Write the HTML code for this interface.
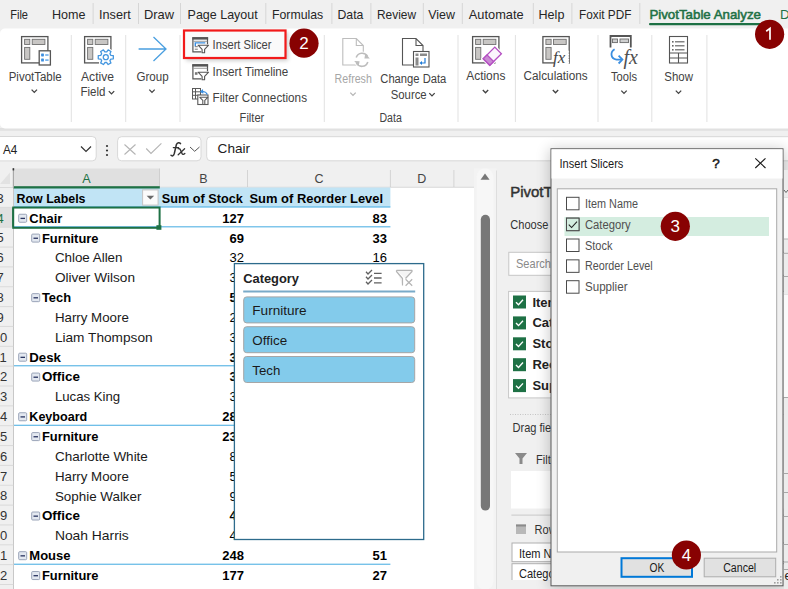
<!DOCTYPE html><html><head><meta charset="utf-8"><style>html,body{margin:0;padding:0;width:788px;height:589px;overflow:hidden;background:#f0f0f0}svg{display:block;font-family:"Liberation Sans",sans-serif}</style></head><body>
<svg width="788" height="589" viewBox="0 0 788 589">
<rect x="0" y="0" width="788" height="589" fill="#f0f0f0"/>
<text x="10.2" y="19" font-size="13" fill="#262626" textLength="17.8" lengthAdjust="spacingAndGlyphs">File</text>
<text x="52" y="19" font-size="13" fill="#262626" textLength="33.5" lengthAdjust="spacingAndGlyphs">Home</text>
<text x="99" y="19" font-size="13" fill="#262626" textLength="31.7" lengthAdjust="spacingAndGlyphs">Insert</text>
<text x="144" y="19" font-size="13" fill="#262626" textLength="30" lengthAdjust="spacingAndGlyphs">Draw</text>
<text x="187.6" y="19" font-size="13" fill="#262626" textLength="70.1" lengthAdjust="spacingAndGlyphs">Page Layout</text>
<text x="272" y="19" font-size="13" fill="#262626" textLength="51.2" lengthAdjust="spacingAndGlyphs">Formulas</text>
<text x="337.5" y="19" font-size="13" fill="#262626" textLength="25.9" lengthAdjust="spacingAndGlyphs">Data</text>
<text x="377" y="19" font-size="13" fill="#262626" textLength="39" lengthAdjust="spacingAndGlyphs">Review</text>
<text x="428.3" y="19" font-size="13" fill="#262626" textLength="26.7" lengthAdjust="spacingAndGlyphs">View</text>
<text x="468.8" y="19" font-size="13" fill="#262626" textLength="54.8" lengthAdjust="spacingAndGlyphs">Automate</text>
<text x="538.5" y="19" font-size="13" fill="#262626" textLength="25.9" lengthAdjust="spacingAndGlyphs">Help</text>
<text x="579" y="19" font-size="13" fill="#262626" textLength="52.4" lengthAdjust="spacingAndGlyphs">Foxit PDF</text>
<rect x="92.6" y="3" width="1" height="21" fill="#d6d6d6"/>
<rect x="138" y="3" width="1" height="21" fill="#d6d6d6"/>
<rect x="180" y="3" width="1" height="21" fill="#d6d6d6"/>
<rect x="265.3" y="3" width="1" height="21" fill="#d6d6d6"/>
<rect x="331.4" y="3" width="1" height="21" fill="#d6d6d6"/>
<rect x="370.4" y="3" width="1" height="21" fill="#d6d6d6"/>
<rect x="422.8" y="3" width="1" height="21" fill="#d6d6d6"/>
<rect x="461.8" y="3" width="1" height="21" fill="#d6d6d6"/>
<rect x="532.8" y="3" width="1" height="21" fill="#d6d6d6"/>
<rect x="571.4" y="3" width="1" height="21" fill="#d6d6d6"/>
<rect x="639.3" y="3" width="1" height="21" fill="#d6d6d6"/>
<text x="649.4" y="19" font-size="13.4" fill="#1e7145" textLength="111.6" lengthAdjust="spacingAndGlyphs" stroke="#1e7145" stroke-width="0.55">PivotTable Analyze</text>
<rect x="649" y="23" width="112.5" height="2.2" rx="1" fill="#1e7145"/>
<text x="780" y="19" font-size="13.4" fill="#1e7145">D</text>
<rect x="0" y="129" width="800" height="2" fill="#e4e4e4"/>
<rect x="0" y="128.3" width="800" height="1" fill="#d9d9d9"/>
<rect x="0" y="28.5" width="800" height="100" rx="5" fill="#ffffff"/>
<rect x="70.8" y="35" width="1" height="87" fill="#e1e1e1"/>
<rect x="125.2" y="35" width="1" height="87" fill="#e1e1e1"/>
<rect x="179.5" y="35" width="1" height="87" fill="#e1e1e1"/>
<rect x="323.8" y="35" width="1" height="87" fill="#e1e1e1"/>
<rect x="457.5" y="35" width="1" height="87" fill="#e1e1e1"/>
<rect x="514.9" y="35" width="1" height="87" fill="#e1e1e1"/>
<rect x="597.5" y="35" width="1" height="87" fill="#e1e1e1"/>
<rect x="651.3" y="35" width="1" height="87" fill="#e1e1e1"/>
<rect x="706.4" y="35" width="1" height="87" fill="#e1e1e1"/>
<rect x="21.6" y="36.6" width="26.3" height="26.3" fill="#fff" stroke="#555" stroke-width="1.3"/>
<rect x="24.6" y="39.3" width="5.2" height="5.2" fill="#c8c6c4" stroke="#707070" stroke-width="0.9"/>
<rect x="32.2" y="39.3" width="12.7" height="5.2" fill="#c8c6c4" stroke="#707070" stroke-width="0.9"/>
<rect x="24.6" y="47.4" width="5.2" height="11.9" fill="#c8c6c4" stroke="#707070" stroke-width="0.9"/>
<rect x="39.2" y="50.8" width="11.2" height="14.2" fill="#fff" stroke="#555" stroke-width="1.3"/>
<rect x="41.1" y="53.4" width="2.8" height="3" rx="0.6" fill="#3d8fe0"/><rect x="45.2" y="54.3" width="3.4" height="1.4" fill="#5aa2e6"/>
<rect x="41.1" y="58.5" width="2.8" height="3" rx="0.6" fill="#3d8fe0"/><rect x="45.2" y="59.4" width="3.4" height="1.4" fill="#5aa2e6"/>
<text x="8.7" y="80.5" font-size="12.3" fill="#424242" textLength="53" lengthAdjust="spacingAndGlyphs">PivotTable</text>
<path d="M31.599999999999998 89.6 L34.3 92.4 L37.0 89.6" fill="none" stroke="#424242" stroke-width="1.3"/>
<rect x="84.6" y="36.6" width="26.3" height="26.3" fill="#fff" stroke="#555" stroke-width="1.3"/>
<rect x="87.6" y="39.3" width="5.2" height="5.2" fill="#c8c6c4" stroke="#707070" stroke-width="0.9"/>
<rect x="95.2" y="39.3" width="12.7" height="5.2" fill="#c8c6c4" stroke="#707070" stroke-width="0.9"/>
<rect x="87.6" y="47.4" width="5.2" height="11.9" fill="#c8c6c4" stroke="#707070" stroke-width="0.9"/>
<g transform="translate(105.8,57.2)"><path d="M7.53 -1.60 L7.53 1.60 L5.07 1.85 L4.14 3.47 L5.15 5.72 L2.38 7.32 L0.94 5.32 L-0.94 5.32 L-2.38 7.32 L-5.15 5.72 L-4.14 3.47 L-5.07 1.85 L-7.53 1.60 L-7.53 -1.60 L-5.07 -1.85 L-4.14 -3.47 L-5.15 -5.72 L-2.38 -7.32 L-0.94 -5.32 L0.94 -5.32 L2.38 -7.32 L5.15 -5.72 L4.14 -3.47 L5.07 -1.85 Z" fill="#fff" stroke="#fff" stroke-width="3.5" stroke-linejoin="round"/><path d="M7.53 -1.60 L7.53 1.60 L5.07 1.85 L4.14 3.47 L5.15 5.72 L2.38 7.32 L0.94 5.32 L-0.94 5.32 L-2.38 7.32 L-5.15 5.72 L-4.14 3.47 L-5.07 1.85 L-7.53 1.60 L-7.53 -1.60 L-5.07 -1.85 L-4.14 -3.47 L-5.15 -5.72 L-2.38 -7.32 L-0.94 -5.32 L0.94 -5.32 L2.38 -7.32 L5.15 -5.72 L4.14 -3.47 L5.07 -1.85 Z" fill="#fff" stroke="#4496df" stroke-width="1.3" stroke-linejoin="round"/><circle r="2.5" fill="none" stroke="#4496df" stroke-width="1.3"/></g>
<text x="81" y="80.5" font-size="12.3" fill="#424242" textLength="33" lengthAdjust="spacingAndGlyphs">Active</text>
<text x="80.4" y="96" font-size="12.3" fill="#424242" textLength="25" lengthAdjust="spacingAndGlyphs">Field</text>
<path d="M108.8 91.1 L111.5 93.9 L114.2 91.1" fill="none" stroke="#424242" stroke-width="1.3"/>
<path d="M138.6 49 H166 M153.5 37 L166 49 L153.5 61" fill="none" stroke="#4a9fe0" stroke-width="1.3"/>
<text x="136.4" y="80.5" font-size="12.3" fill="#424242" textLength="32.2" lengthAdjust="spacingAndGlyphs">Group</text>
<path d="M149.3 89.6 L152 92.4 L154.7 89.6" fill="none" stroke="#424242" stroke-width="1.3"/>
<defs><filter id="sh" x="-20%" y="-30%" width="140%" height="160%"><feGaussianBlur stdDeviation="2"/></filter></defs>
<rect x="186" y="32" width="102" height="28.5" fill="#000" opacity="0.22" filter="url(#sh)"/>
<rect x="184" y="30.5" width="101.5" height="27.5" fill="#fafafa" stroke="#f21a1a" stroke-width="2.2"/>
<path d="M201.3 51.900000000000006 H192.9 V37.800000000000004 H207.5 V44.2" fill="#fff" stroke="#555" stroke-width="1.2"/>
<rect x="192.3" y="37.2" width="15.8" height="2.4" fill="#555"/>
<rect x="193.3" y="40.800000000000004" width="14" height="0.9" fill="#8f8f8f"/>
<path d="M195.3 46.2 V42.900000000000006 H205.3" fill="none" stroke="#3a8ee0" stroke-width="1.4"/>
<path d="M194.8 46.7 H197.8 M194.8 49.2 H197.8" stroke="#777" stroke-width="1"/>
<path d="M198.10000000000002 45.2 H208.60000000000002 L204.60000000000002 49.400000000000006 V52.800000000000004 H202.10000000000002 V49.400000000000006 Z" fill="#fff" stroke="#555" stroke-width="1.1" stroke-linejoin="round"/>
<text x="212.6" y="49.3" font-size="12.5" fill="#424242" textLength="58.8" lengthAdjust="spacingAndGlyphs">Insert Slicer</text>
<path d="M201.3 78.9 H192.9 V64.8 H207.5 V71.2" fill="#fff" stroke="#555" stroke-width="1.2"/>
<rect x="192.3" y="64.2" width="15.8" height="2.4" fill="#555"/>
<rect x="193.3" y="67.8" width="14" height="0.9" fill="#8f8f8f"/>
<rect x="194.9" y="72.2" width="2.6" height="2.6" fill="#777"/>
<path d="M198.10000000000002 72.2 H208.60000000000002 L204.60000000000002 76.4 V79.8 H202.10000000000002 V76.4 Z" fill="#fff" stroke="#555" stroke-width="1.1" stroke-linejoin="round"/>
<text x="212.6" y="75.7" font-size="12.5" fill="#424242" textLength="75.7" lengthAdjust="spacingAndGlyphs">Insert Timeline</text>
<g stroke="#5a5a5a" stroke-width="1" fill="#fff"><rect x="192.5" y="88.5" width="8" height="10.5"/><path d="M192.5 91.8 H200.5 M192.5 95.3 H200.5 M195.5 88.5 V99"/></g>
<g stroke="#5a5a5a" stroke-width="1.1" fill="#fff"><rect x="197.8" y="95" width="10.2" height="9.5"/><path d="M199.8 97.3 H207.8 L204.8 100.3 V104.5 H202.8 V100.3 Z" stroke-linejoin="round"/></g>
<path d="M201.5 92 A4.5 4.5 0 0 1 207.3 94.5" fill="none" stroke="#3a8ee0" stroke-width="1.4"/><path d="M199.8 91.8 L203 89 L203.3 93.8 Z" fill="#3a8ee0"/>
<text x="212.6" y="101.5" font-size="12.5" fill="#424242" textLength="94.4" lengthAdjust="spacingAndGlyphs">Filter Connections</text>
<text x="239.6" y="121.8" font-size="12.3" fill="#424242" textLength="24.7" lengthAdjust="spacingAndGlyphs">Filter</text>
<path d="M342.8 38.5 H356.3 L363.3 45.5 V65 H342.8 Z M356.3 38.5 V45.5 H363.3" fill="#fff" stroke="#bdbdbd" stroke-width="1.1"/>
<circle cx="362" cy="59.8" r="8.2" fill="#fff"/>
<g fill="none" stroke="#bdbdbd" stroke-width="1.6"><path d="M356.2 57.6 A6.2 6.2 0 0 1 367.6 56.6"/><path d="M367.8 62 A6.2 6.2 0 0 1 356.4 63"/></g>
<path d="M365.3 53.6 L369.8 58.6 L364.4 58.4 Z M358.7 66 L354.2 61 L359.6 61.2 Z" fill="#bdbdbd"/>
<text x="334.6" y="82.8" font-size="12.3" fill="#a6a6a6" textLength="37.2" lengthAdjust="spacingAndGlyphs">Refresh</text>
<path d="M350.3 92.6 L353 95.4 L355.7 92.6" fill="none" stroke="#b5b5b5" stroke-width="1.3"/>
<path d="M402.5 38.5 H416 L423 45.5 V65 H402.5 Z M416 38.5 V45.5 H423" fill="#fff" stroke="#555" stroke-width="1.1"/>
<rect x="413.5" y="51.5" width="15.5" height="15.5" fill="#fff" stroke="#555" stroke-width="1.1"/><rect x="415.5" y="53.5" width="3" height="2.5" fill="#8a8a8a"/><rect x="420" y="53.5" width="7" height="2.5" fill="#8a8a8a"/><rect x="415.5" y="57.5" width="3" height="8" fill="#8a8a8a"/>
<path d="M425 58 V63 H421" fill="none" stroke="#1f7ad6" stroke-width="1.2"/><path d="M419.5 63 L422 61 L422 65 Z" fill="#1f7ad6"/>
<text x="380.3" y="82.8" font-size="12.3" fill="#424242" textLength="66" lengthAdjust="spacingAndGlyphs">Change Data</text>
<text x="390.7" y="98.8" font-size="12.3" fill="#424242" textLength="36" lengthAdjust="spacingAndGlyphs">Source</text>
<path d="M429.3 93.1 L432 95.9 L434.7 93.1" fill="none" stroke="#424242" stroke-width="1.3"/>
<text x="379.5" y="121.8" font-size="12.3" fill="#424242" textLength="22.3" lengthAdjust="spacingAndGlyphs">Data</text>
<rect x="472.6" y="36.6" width="26.3" height="26.3" fill="#fff" stroke="#555" stroke-width="1.3"/>
<rect x="475.6" y="39.3" width="5.2" height="5.2" fill="#c8c6c4" stroke="#707070" stroke-width="0.9"/>
<rect x="483.2" y="39.3" width="12.7" height="5.2" fill="#c8c6c4" stroke="#707070" stroke-width="0.9"/>
<rect x="475.6" y="47.4" width="5.2" height="11.9" fill="#c8c6c4" stroke="#707070" stroke-width="0.9"/>
<rect x="495.5" y="57" width="6" height="8" fill="#fff"/>
<g transform="translate(492.3,56.2) rotate(-45)"><rect x="-8.2" y="-4.65" width="16.4" height="9.3" fill="#fff" stroke="#fff" stroke-width="3.5"/><rect x="-8.2" y="-4.65" width="16.4" height="9.3" fill="#fbf6fc" stroke="#b44fc2" stroke-width="1.3"/><rect x="-8.2" y="-4.65" width="5.4" height="9.3" fill="#c98ad3" stroke="#b44fc2" stroke-width="1.3"/></g>
<text x="466.2" y="80.4" font-size="12.3" fill="#424242" textLength="39.2" lengthAdjust="spacingAndGlyphs">Actions</text>
<path d="M482.8 90.0 L485.5 92.80000000000001 L488.2 90.0" fill="none" stroke="#424242" stroke-width="1.3"/>
<rect x="542.9" y="36.6" width="26.3" height="26.3" fill="#fff" stroke="#555" stroke-width="1.3"/>
<rect x="545.9" y="39.3" width="5.2" height="5.2" fill="#c8c6c4" stroke="#707070" stroke-width="0.9"/>
<rect x="553.5" y="39.3" width="12.7" height="5.2" fill="#c8c6c4" stroke="#707070" stroke-width="0.9"/>
<rect x="545.9" y="47.4" width="5.2" height="11.9" fill="#c8c6c4" stroke="#707070" stroke-width="0.9"/>
<rect x="554.5" y="50" width="14.6" height="15" fill="#fff"/>
<path d="M569.2 50 V63.5" stroke="#666" stroke-width="1.1" stroke-dasharray="1.2 1.4"/>
<text x="553" y="63" font-family="Liberation Serif" font-style="italic" font-size="17" fill="#444">fx</text>
<text x="523.6" y="80.4" font-size="12.3" fill="#424242" textLength="64" lengthAdjust="spacingAndGlyphs">Calculations</text>
<path d="M552.8 90.0 L555.5 92.80000000000001 L558.2 90.0" fill="none" stroke="#424242" stroke-width="1.3"/>
<path d="M610.5 47.5 V36 H630.8 V47.5" fill="none" stroke="#555" stroke-width="1.8"/>
<rect x="612.5" y="39" width="5" height="3.6" fill="#cfcfcf" stroke="#6a6a6a" stroke-width="0.9"/><rect x="620" y="39" width="8.5" height="3.6" fill="#cfcfcf" stroke="#6a6a6a" stroke-width="0.9"/>
<path d="M614.6 49.2 C610.3 51.5 610 58.6 616.5 59.6 H621.5" fill="none" stroke="#3a8ee0" stroke-width="1.8"/><path d="M618.6 55.7 L622.4 59.6 L618.6 63.5" fill="none" stroke="#3a8ee0" stroke-width="1.8"/>
<text x="623.5" y="63.5" font-family="Liberation Serif" font-style="italic" font-size="20" fill="#505050">fx</text>
<text x="611" y="80.8" font-size="12.3" fill="#424242" textLength="26" lengthAdjust="spacingAndGlyphs">Tools</text>
<path d="M621.3 90.6 L624 93.4 L626.7 90.6" fill="none" stroke="#424242" stroke-width="1.3"/>
<rect x="669.5" y="36.5" width="18" height="26.5" fill="#fff" stroke="#555" stroke-width="1.1"/>
<rect x="672" y="41" width="1.6" height="1.6" fill="#666"/><rect x="675" y="41.2" width="9.5" height="1.2" fill="#666"/>
<rect x="672" y="45" width="1.6" height="1.6" fill="#666"/><rect x="675" y="45.2" width="9.5" height="1.2" fill="#666"/>
<rect x="672" y="49" width="1.6" height="1.6" fill="#666"/><rect x="675" y="49.2" width="9.5" height="1.2" fill="#666"/>
<path d="M669.5 53 H687.5 M669.5 58 H687.5 M678.5 53 V63" fill="none" stroke="#555" stroke-width="1.1"/>
<text x="664.3" y="80.8" font-size="12.3" fill="#424242" textLength="28.7" lengthAdjust="spacingAndGlyphs">Show</text>
<path d="M675.8 90.6 L678.5 93.4 L681.2 90.6" fill="none" stroke="#424242" stroke-width="1.3"/>
<rect x="-5" y="136.5" width="101.2" height="24.4" rx="4" fill="#fff" stroke="#d8d8d8" stroke-width="1"/>
<text x="3" y="153.8" font-size="13" fill="#222" textLength="14.3" lengthAdjust="spacingAndGlyphs">A4</text>
<path d="M81 146.5 L86 151.5 L91 146.5" fill="none" stroke="#333" stroke-width="1.2"/>
<circle cx="107" cy="146" r="1.1" fill="#333"/>
<circle cx="107" cy="150.5" r="1.1" fill="#333"/>
<circle cx="107" cy="155" r="1.1" fill="#333"/>
<rect x="117.6" y="136.7" width="83.4" height="24.1" rx="4" fill="#fff" stroke="#d8d8d8" stroke-width="1"/>
<path d="M124.5 144.5 L135.5 154.5 M135.5 144.5 L124.5 154.5" stroke="#b4b4b4" stroke-width="1.1"/>
<path d="M146.2 148.5 L151 153.5 L161.4 143.3" fill="none" stroke="#b4b4b4" stroke-width="1.1"/>
<g fill="none" stroke="#333" stroke-linecap="round"><path d="M180.5 143.6 C179.5 142.4 177.3 142.3 176.4 144.5 L174.3 153.5 C173.6 156.2 172 156.3 171 155.3" stroke-width="1.5"/><path d="M173.3 147.6 H178.6" stroke-width="1.2"/><path d="M178.2 148.6 C179.8 148.2 180.4 149.2 181.2 151.4 L182 153.4 C182.5 154.6 183.6 154.8 184.8 153.6" stroke-width="1.4"/><path d="M184.6 148.8 L178.2 154.8" stroke-width="1.3"/></g>
<path d="M190 147 L194.7 151.3 L199.5 147" fill="none" stroke="#555" stroke-width="1"/>
<rect x="206.7" y="136.7" width="600" height="24.1" rx="4" fill="#fff" stroke="#d8d8d8" stroke-width="1"/>
<text x="217.6" y="153.2" font-size="13" fill="#222" textLength="32.4" lengthAdjust="spacingAndGlyphs">Chair</text>
<rect x="0" y="168.5" width="474" height="19" fill="#f0f0f0"/>
<rect x="13.5" y="168.5" width="146" height="19" fill="#e0e0e0"/>
<path d="M0 184 L10 184 L10 172.5 Z" fill="#e2e2e2"/>
<rect x="13" y="168.5" width="1" height="19" fill="#cfcfcf"/>
<rect x="247.0" y="170" width="1" height="17" fill="#d4d4d4"/>
<rect x="389.9" y="170" width="1" height="17" fill="#d4d4d4"/>
<rect x="453.4" y="170" width="1" height="17" fill="#d4d4d4"/>
<rect x="159" y="168.5" width="1" height="19" fill="#cfcfcf"/>
<rect x="160" y="186.9" width="314" height="1" fill="#bdbdbd"/>
<text x="82.2" y="183" font-size="12.5" fill="#1e7145" textLength="8.4" lengthAdjust="spacingAndGlyphs">A</text>
<text x="203.5" y="183" font-size="12.5" fill="#444" text-anchor="middle">B</text>
<text x="319" y="183" font-size="12.5" fill="#444" text-anchor="middle">C</text>
<text x="421.8" y="183" font-size="12.5" fill="#444" text-anchor="middle">D</text>
<rect x="0" y="187.5" width="13.5" height="401.5" fill="#f0f0f0"/>
<rect x="0" y="207.35" width="13.5" height="19.85" fill="#e0e0e0"/>
<rect x="13" y="187.5" width="1" height="401.5" fill="#c8c8c8"/>
<rect x="12.3" y="207.35" width="2" height="19.85" fill="#1e7145"/>
<rect x="0" y="187.00" width="13.3" height="1" fill="#dadada"/>
<rect x="0" y="206.85" width="13.3" height="1" fill="#dadada"/>
<rect x="0" y="226.70" width="13.3" height="1" fill="#dadada"/>
<rect x="0" y="246.55" width="13.3" height="1" fill="#dadada"/>
<rect x="0" y="266.40" width="13.3" height="1" fill="#dadada"/>
<rect x="0" y="286.25" width="13.3" height="1" fill="#dadada"/>
<rect x="0" y="306.10" width="13.3" height="1" fill="#dadada"/>
<rect x="0" y="325.95" width="13.3" height="1" fill="#dadada"/>
<rect x="0" y="345.80" width="13.3" height="1" fill="#dadada"/>
<rect x="0" y="365.65" width="13.3" height="1" fill="#dadada"/>
<rect x="0" y="385.50" width="13.3" height="1" fill="#dadada"/>
<rect x="0" y="405.35" width="13.3" height="1" fill="#dadada"/>
<rect x="0" y="425.20" width="13.3" height="1" fill="#dadada"/>
<rect x="0" y="445.05" width="13.3" height="1" fill="#dadada"/>
<rect x="0" y="464.90" width="13.3" height="1" fill="#dadada"/>
<rect x="0" y="484.75" width="13.3" height="1" fill="#dadada"/>
<rect x="0" y="504.60" width="13.3" height="1" fill="#dadada"/>
<rect x="0" y="524.45" width="13.3" height="1" fill="#dadada"/>
<rect x="0" y="544.30" width="13.3" height="1" fill="#dadada"/>
<rect x="0" y="564.15" width="13.3" height="1" fill="#dadada"/>
<rect x="0" y="584.00" width="13.3" height="1" fill="#dadada"/>
<text x="0" y="202.7" font-size="13" fill="#333" text-anchor="middle">3</text>
<text x="0" y="222.55" font-size="13" fill="#1e7145" text-anchor="middle">4</text>
<text x="0" y="242.4" font-size="13" fill="#333" text-anchor="middle">5</text>
<text x="0" y="262.25" font-size="13" fill="#333" text-anchor="middle">6</text>
<text x="0" y="282.1" font-size="13" fill="#333" text-anchor="middle">7</text>
<text x="0" y="301.95" font-size="13" fill="#333" text-anchor="middle">8</text>
<text x="0" y="321.8" font-size="13" fill="#333" text-anchor="middle">9</text>
<text x="0" y="341.65" font-size="13" fill="#333" text-anchor="middle">10</text>
<text x="0" y="361.5" font-size="13" fill="#333" text-anchor="middle">11</text>
<text x="0" y="381.35" font-size="13" fill="#333" text-anchor="middle">12</text>
<text x="0" y="401.2" font-size="13" fill="#333" text-anchor="middle">13</text>
<text x="0" y="421.05" font-size="13" fill="#333" text-anchor="middle">14</text>
<text x="0" y="440.9" font-size="13" fill="#333" text-anchor="middle">15</text>
<text x="0" y="460.75" font-size="13" fill="#333" text-anchor="middle">16</text>
<text x="0" y="480.6" font-size="13" fill="#333" text-anchor="middle">17</text>
<text x="0" y="500.45" font-size="13" fill="#333" text-anchor="middle">18</text>
<text x="0" y="520.3" font-size="13" fill="#333" text-anchor="middle">19</text>
<text x="0" y="540.15" font-size="13" fill="#333" text-anchor="middle">20</text>
<text x="0" y="560.0" font-size="13" fill="#333" text-anchor="middle">21</text>
<text x="0" y="579.85" font-size="13" fill="#333" text-anchor="middle">22</text>
<rect x="14" y="187.5" width="460" height="401.5" fill="#fff"/>
<rect x="14" y="187.5" width="376.4" height="19.85" fill="#c1e4f5"/>
<rect x="14" y="206.35" width="376.4" height="1.2" fill="#61b8e6"/>
<rect x="14" y="226.20" width="376.4" height="1.2" fill="#61b8e6"/>
<rect x="14" y="365.15" width="376.4" height="1.2" fill="#61b8e6"/>
<rect x="14" y="424.70" width="376.4" height="1.2" fill="#61b8e6"/>
<rect x="14" y="563.65" width="376.4" height="1.2" fill="#61b8e6"/>
<text x="16.5" y="202.8" font-size="13" fill="#000" font-weight="bold" textLength="69" lengthAdjust="spacingAndGlyphs">Row Labels</text>
<rect x="142.6" y="189.9" width="15.5" height="15.2" fill="#fbfbfb" stroke="#c4c4c4" stroke-width="1"/>
<path d="M146.6 195.8 H154.2 L150.4 199.6 Z" fill="#6a6a6a"/>
<text x="161.8" y="202.8" font-size="13" fill="#000" font-weight="bold" textLength="81" lengthAdjust="spacingAndGlyphs">Sum of Stock</text>
<text x="249.5" y="202.8" font-size="13" fill="#000" font-weight="bold" textLength="133.6" lengthAdjust="spacingAndGlyphs">Sum of Reorder Level</text>
<rect x="18.7" y="214.25" width="8" height="8" rx="1" fill="#e3e8f0" stroke="#9aa4b8" stroke-width="1"/>
<rect x="20.5" y="217.75" width="4.5" height="1.3" fill="#2a3560"/>
<text x="29.3" y="222.65" font-size="13" fill="#000" font-weight="bold" textLength="33.1" lengthAdjust="spacingAndGlyphs">Chair</text>
<text x="244" y="222.65" font-size="13" fill="#000" font-weight="bold" text-anchor="end">127</text>
<text x="387" y="222.65" font-size="13" fill="#000" font-weight="bold" text-anchor="end">83</text>
<rect x="31.7" y="234.1" width="8" height="8" rx="1" fill="#e3e8f0" stroke="#9aa4b8" stroke-width="1"/>
<rect x="33.5" y="237.6" width="4.5" height="1.3" fill="#2a3560"/>
<text x="41.9" y="242.5" font-size="13" fill="#000" font-weight="bold" textLength="56.6" lengthAdjust="spacingAndGlyphs">Furniture</text>
<text x="244" y="242.5" font-size="13" fill="#000" font-weight="bold" text-anchor="end">69</text>
<text x="387" y="242.5" font-size="13" fill="#000" font-weight="bold" text-anchor="end">33</text>
<text x="54.9" y="262.35" font-size="13.4" fill="#1a1a1a" textLength="67.6" lengthAdjust="spacingAndGlyphs">Chloe Allen</text>
<text x="244" y="262.35" font-size="13" fill="#000" text-anchor="end">32</text>
<text x="387" y="262.35" font-size="13" fill="#000" text-anchor="end">16</text>
<text x="54.9" y="282.2" font-size="13.4" fill="#1a1a1a" textLength="80.1" lengthAdjust="spacingAndGlyphs">Oliver Wilson</text>
<text x="244" y="282.2" font-size="13" fill="#000" text-anchor="end">37</text>
<text x="387" y="282.2" font-size="13" fill="#000" text-anchor="end">17</text>
<rect x="31.7" y="293.65" width="8" height="8" rx="1" fill="#e3e8f0" stroke="#9aa4b8" stroke-width="1"/>
<rect x="33.5" y="297.15" width="4.5" height="1.3" fill="#2a3560"/>
<text x="41.9" y="302.05" font-size="13" fill="#000" font-weight="bold" textLength="29.2" lengthAdjust="spacingAndGlyphs">Tech</text>
<text x="244" y="302.05" font-size="13" fill="#000" font-weight="bold" text-anchor="end">58</text>
<text x="387" y="302.05" font-size="13" fill="#000" font-weight="bold" text-anchor="end">50</text>
<text x="54.9" y="321.9" font-size="13.4" fill="#1a1a1a" textLength="73.9" lengthAdjust="spacingAndGlyphs">Harry Moore</text>
<text x="244" y="321.9" font-size="13" fill="#000" text-anchor="end">25</text>
<text x="387" y="321.9" font-size="13" fill="#000" text-anchor="end">20</text>
<text x="54.9" y="341.75" font-size="13.4" fill="#1a1a1a" textLength="97.7" lengthAdjust="spacingAndGlyphs">Liam Thompson</text>
<text x="244" y="341.75" font-size="13" fill="#000" text-anchor="end">33</text>
<text x="387" y="341.75" font-size="13" fill="#000" text-anchor="end">30</text>
<rect x="18.7" y="353.2" width="8" height="8" rx="1" fill="#e3e8f0" stroke="#9aa4b8" stroke-width="1"/>
<rect x="20.5" y="356.7" width="4.5" height="1.3" fill="#2a3560"/>
<text x="29.3" y="361.6" font-size="13" fill="#000" font-weight="bold" textLength="31.7" lengthAdjust="spacingAndGlyphs">Desk</text>
<text x="244" y="361.6" font-size="13" fill="#000" font-weight="bold" text-anchor="end">35</text>
<text x="387" y="361.6" font-size="13" fill="#000" font-weight="bold" text-anchor="end">21</text>
<rect x="31.7" y="373.04999999999995" width="8" height="8" rx="1" fill="#e3e8f0" stroke="#9aa4b8" stroke-width="1"/>
<rect x="33.5" y="376.54999999999995" width="4.5" height="1.3" fill="#2a3560"/>
<text x="41.9" y="381.45" font-size="13" fill="#000" font-weight="bold" textLength="38.1" lengthAdjust="spacingAndGlyphs">Office</text>
<text x="244" y="381.45" font-size="13" fill="#000" font-weight="bold" text-anchor="end">35</text>
<text x="387" y="381.45" font-size="13" fill="#000" font-weight="bold" text-anchor="end">21</text>
<text x="54.9" y="401.3" font-size="13.4" fill="#1a1a1a" textLength="65.3" lengthAdjust="spacingAndGlyphs">Lucas King</text>
<text x="244" y="401.3" font-size="13" fill="#000" text-anchor="end">35</text>
<text x="387" y="401.3" font-size="13" fill="#000" text-anchor="end">21</text>
<rect x="18.7" y="412.75" width="8" height="8" rx="1" fill="#e3e8f0" stroke="#9aa4b8" stroke-width="1"/>
<rect x="20.5" y="416.25" width="4.5" height="1.3" fill="#2a3560"/>
<text x="29.3" y="421.15" font-size="13" fill="#000" font-weight="bold" textLength="58" lengthAdjust="spacingAndGlyphs">Keyboard</text>
<text x="244" y="421.15" font-size="13" fill="#000" font-weight="bold" text-anchor="end">283</text>
<text x="387" y="421.15" font-size="13" fill="#000" font-weight="bold" text-anchor="end">75</text>
<rect x="31.7" y="432.6" width="8" height="8" rx="1" fill="#e3e8f0" stroke="#9aa4b8" stroke-width="1"/>
<rect x="33.5" y="436.1" width="4.5" height="1.3" fill="#2a3560"/>
<text x="41.9" y="441.0" font-size="13" fill="#000" font-weight="bold" textLength="56.6" lengthAdjust="spacingAndGlyphs">Furniture</text>
<text x="244" y="441.0" font-size="13" fill="#000" font-weight="bold" text-anchor="end">235</text>
<text x="387" y="441.0" font-size="13" fill="#000" font-weight="bold" text-anchor="end">60</text>
<text x="54.9" y="460.85" font-size="13.4" fill="#1a1a1a" textLength="93" lengthAdjust="spacingAndGlyphs">Charlotte White</text>
<text x="244" y="460.85" font-size="13" fill="#000" text-anchor="end">82</text>
<text x="387" y="460.85" font-size="13" fill="#000" text-anchor="end">20</text>
<text x="54.9" y="480.7" font-size="13.4" fill="#1a1a1a" textLength="73.9" lengthAdjust="spacingAndGlyphs">Harry Moore</text>
<text x="244" y="480.7" font-size="13" fill="#000" text-anchor="end">57</text>
<text x="387" y="480.7" font-size="13" fill="#000" text-anchor="end">20</text>
<text x="54.9" y="500.55" font-size="13.4" fill="#1a1a1a" textLength="86.6" lengthAdjust="spacingAndGlyphs">Sophie Walker</text>
<text x="244" y="500.55" font-size="13" fill="#000" text-anchor="end">96</text>
<text x="387" y="500.55" font-size="13" fill="#000" text-anchor="end">20</text>
<rect x="31.7" y="512.0" width="8" height="8" rx="1" fill="#e3e8f0" stroke="#9aa4b8" stroke-width="1"/>
<rect x="33.5" y="515.5" width="4.5" height="1.3" fill="#2a3560"/>
<text x="41.9" y="520.4" font-size="13" fill="#000" font-weight="bold" textLength="38.1" lengthAdjust="spacingAndGlyphs">Office</text>
<text x="244" y="520.4" font-size="13" fill="#000" font-weight="bold" text-anchor="end">48</text>
<text x="387" y="520.4" font-size="13" fill="#000" font-weight="bold" text-anchor="end">15</text>
<text x="54.9" y="540.25" font-size="13.4" fill="#1a1a1a" textLength="73.9" lengthAdjust="spacingAndGlyphs">Noah Harris</text>
<text x="244" y="540.25" font-size="13" fill="#000" text-anchor="end">48</text>
<text x="387" y="540.25" font-size="13" fill="#000" text-anchor="end">15</text>
<rect x="18.7" y="551.6999999999999" width="8" height="8" rx="1" fill="#e3e8f0" stroke="#9aa4b8" stroke-width="1"/>
<rect x="20.5" y="555.1999999999999" width="4.5" height="1.3" fill="#2a3560"/>
<text x="29.3" y="560.1" font-size="13" fill="#000" font-weight="bold" textLength="41.2" lengthAdjust="spacingAndGlyphs">Mouse</text>
<text x="244" y="560.1" font-size="13" fill="#000" font-weight="bold" text-anchor="end">248</text>
<text x="387" y="560.1" font-size="13" fill="#000" font-weight="bold" text-anchor="end">51</text>
<rect x="31.7" y="571.5500000000001" width="8" height="8" rx="1" fill="#e3e8f0" stroke="#9aa4b8" stroke-width="1"/>
<rect x="33.5" y="575.0500000000001" width="4.5" height="1.3" fill="#2a3560"/>
<text x="41.9" y="579.95" font-size="13" fill="#000" font-weight="bold" textLength="56.6" lengthAdjust="spacingAndGlyphs">Furniture</text>
<text x="244" y="579.95" font-size="13" fill="#000" font-weight="bold" text-anchor="end">177</text>
<text x="387" y="579.95" font-size="13" fill="#000" font-weight="bold" text-anchor="end">27</text>
<rect x="13.2" y="207.55" width="146.4" height="20.25" fill="none" stroke="#1e7145" stroke-width="2"/>
<rect x="156.4" y="225.20" width="5" height="4.6" fill="#1e7145"/>
<rect x="13.5" y="186.2" width="146.3" height="2.3" fill="#1e7145"/>
<rect x="12.8" y="168.5" width="1.2" height="19" fill="#a9a9a9"/>
<rect x="12.6" y="168.2" width="1.6" height="2.2" fill="#333"/>
<rect x="474" y="168.5" width="22.5" height="421" fill="#f3f3f3"/>
<rect x="476.7" y="168.5" width="16.7" height="421" rx="8" fill="#f7f7f7"/>
<path d="M480.5 179.8 L485 173.4 L489.6 179.8 Z" fill="#777"/>
<rect x="480.8" y="214.8" width="9.2" height="295.8" rx="4.6" fill="#777"/>
<rect x="496" y="170.5" width="1" height="419" fill="#dedede"/>
<rect x="497" y="168.5" width="300" height="421" fill="#f0f0f0"/>
<text x="510.3" y="197.1" font-size="15.4" fill="#333" textLength="112.9" lengthAdjust="spacingAndGlyphs" stroke="#333" stroke-width="0.5">PivotTable Fields</text>
<text x="510.3" y="228.9" font-size="12.7" fill="#333" textLength="148.0" lengthAdjust="spacingAndGlyphs">Choose fields to add to report:</text>
<rect x="508.8" y="252.3" width="300" height="23" fill="#fff" stroke="#c6c6c6" stroke-width="1"/>
<text x="516" y="267.5" font-size="12.7" fill="#8a8a8a" textLength="35.0" lengthAdjust="spacingAndGlyphs">Search</text>
<rect x="508.6" y="291.4" width="300" height="106.5" fill="#fff" stroke="#c6c6c6" stroke-width="1"/>
<rect x="513" y="295.5" width="13" height="13" fill="#1e7145"/>
<path d="M516 302.2 L518.5 304.7 L523 299.8" fill="none" stroke="#fff" stroke-width="1.4"/>
<text x="532.4" y="306.5" font-size="13" fill="#222" font-weight="bold">Item Name</text>
<rect x="513" y="316.4" width="13" height="13" fill="#1e7145"/>
<path d="M516 323.1 L518.5 325.6 L523 320.7" fill="none" stroke="#fff" stroke-width="1.4"/>
<text x="532.4" y="327.4" font-size="13" fill="#222" font-weight="bold">Category</text>
<rect x="513" y="337.3" width="13" height="13" fill="#1e7145"/>
<path d="M516 344.0 L518.5 346.5 L523 341.6" fill="none" stroke="#fff" stroke-width="1.4"/>
<text x="532.4" y="348.3" font-size="13" fill="#222" font-weight="bold">Stock</text>
<rect x="513" y="358.2" width="13" height="13" fill="#1e7145"/>
<path d="M516 364.9 L518.5 367.4 L523 362.5" fill="none" stroke="#fff" stroke-width="1.4"/>
<text x="532.4" y="369.2" font-size="13" fill="#222" font-weight="bold">Reorder Level</text>
<rect x="513" y="379.1" width="13" height="13" fill="#1e7145"/>
<path d="M516 385.8 L518.5 388.3 L523 383.4" fill="none" stroke="#fff" stroke-width="1.4"/>
<text x="532.4" y="390.1" font-size="13" fill="#222" font-weight="bold">Supplier</text>
<path d="M510 414.5 H800" stroke="#c4c4c4" stroke-width="1" stroke-dasharray="1 1.5"/>
<text x="512.5" y="432" font-size="12.7" fill="#333" textLength="163.4" lengthAdjust="spacingAndGlyphs">Drag fields between areas below:</text>
<path d="M515 453 H527 L522.5 458.5 V464 H519.5 V458.5 Z" fill="#8a8a8a"/>
<text x="536" y="464" font-size="12.7" fill="#333" textLength="30.1" lengthAdjust="spacingAndGlyphs">Filters</text>
<rect x="511" y="471" width="300" height="37.5" fill="#fff"/>
<rect x="511.4" y="514.6" width="300" height="1" fill="#c8c8c8"/>
<rect x="516" y="524.5" width="10" height="9.5" fill="#b8b8b8"/><rect x="516" y="524.5" width="10" height="2" fill="#8a8a8a"/>
<text x="534.6" y="534" font-size="12.7" fill="#333" textLength="27.6" lengthAdjust="spacingAndGlyphs">Rows</text>
<rect x="512" y="543" width="300" height="18.7" fill="#fff" stroke="#b0b0b0" stroke-width="1"/>
<text x="519" y="557.5" font-size="12.7" fill="#222" textLength="54.0" lengthAdjust="spacingAndGlyphs">Item Name</text>
<rect x="512" y="563.7" width="300" height="30" fill="#fff" stroke="#b0b0b0" stroke-width="1"/>
<rect x="497" y="580" width="300" height="10" fill="#f0f0f0"/>
<text x="519" y="578" font-size="12.7" fill="#222" textLength="44.8" lengthAdjust="spacingAndGlyphs">Category</text>
<rect x="234.4" y="263.6" width="189.3" height="275.9" fill="#fff" stroke="#2d6b8c" stroke-width="1.3"/>
<text x="243.2" y="282.9" font-size="13" fill="#222" font-weight="bold" textLength="55.8" lengthAdjust="spacingAndGlyphs">Category</text>
<g fill="none" stroke="#606060" stroke-width="1.3"><path d="M366 271.8 L368 274 L372 270 M366 276.8 L368 279 L372 275 M366 281.8 L368 284 L372 280"/><path d="M374 273.3 H381.6 M374 278 H381.6 M374 282.8 H381.6"/></g>
<g fill="none" stroke="#b4b4b4" stroke-width="1.2" stroke-linejoin="round"><path d="M396.5 270.3 H412 V271.5 L405.5 278.5 M396.5 270.3 V271.5 L402.5 278.5 V285.5" fill="#f4f4f4"/><path d="M405.6 279.3 L412.2 285.8 M412.2 279.3 L405.6 285.8"/></g>
<rect x="243.2" y="290.5" width="172" height="2" fill="#79aac8"/>
<rect x="243.7" y="296.9" width="171" height="26" rx="3" fill="#83cbeb" stroke="#a6a6a6" stroke-width="1"/>
<text x="252.3" y="315.4" font-size="13" fill="#1a1a1a" textLength="54.3" lengthAdjust="spacingAndGlyphs">Furniture</text>
<rect x="243.7" y="326.7" width="171" height="26" rx="3" fill="#83cbeb" stroke="#a6a6a6" stroke-width="1"/>
<text x="252.3" y="345.2" font-size="13" fill="#1a1a1a" textLength="34.8" lengthAdjust="spacingAndGlyphs">Office</text>
<rect x="243.7" y="356.5" width="171" height="26" rx="3" fill="#83cbeb" stroke="#a6a6a6" stroke-width="1"/>
<text x="252.3" y="375.0" font-size="13" fill="#1a1a1a" textLength="28" lengthAdjust="spacingAndGlyphs">Tech</text>
<defs><filter id="dsh" x="-30%" y="-30%" width="160%" height="160%"><feGaussianBlur stdDeviation="7"/></filter></defs>
<rect x="549" y="149" width="236" height="440" fill="#000" opacity="0.2" filter="url(#dsh)"/>
<rect x="551" y="148.8" width="232" height="437" fill="#f0f0f0" stroke="#5a5a5a" stroke-width="1"/>
<rect x="551.5" y="149.3" width="231" height="29.2" fill="#fff"/>
<text x="559.5" y="167.7" font-size="12" fill="#1a1a1a" textLength="63.9" lengthAdjust="spacingAndGlyphs">Insert Slicers</text>
<text x="712.3" y="167.9" font-size="13.5" fill="#1a1a1a" stroke="#1a1a1a" stroke-width="0.5">?</text>
<path d="M755.3 158.3 L765.5 168 M765.5 158.3 L755.3 168" stroke="#1a1a1a" stroke-width="1.1"/>
<rect x="557.3" y="188.8" width="219.4" height="363.2" fill="#fff" stroke="#a9a9a9" stroke-width="1"/>
<rect x="564.5" y="217" width="204.5" height="19" fill="#d4ede0"/>
<rect x="566.5" y="197.30" width="12.5" height="12.5" fill="#fff" stroke="#4a4a4a" stroke-width="1"/>
<text x="585" y="207.9" font-size="12.3" fill="#505050" textLength="53" lengthAdjust="spacingAndGlyphs">Item Name</text>
<rect x="566.5" y="218.15" width="12.5" height="12.5" fill="#fff" stroke="#4a4a4a" stroke-width="1"/>
<rect x="566.5" y="218.15" width="12.5" height="12.5" fill="#d4ede0" stroke="#4a4a4a" stroke-width="1"/>
<path d="M568.8 224.55 L571.6 227.55 L577 221.55" fill="none" stroke="#222" stroke-width="1.1"/>
<text x="585" y="228.75" font-size="12.3" fill="#505050" textLength="45.6" lengthAdjust="spacingAndGlyphs">Category</text>
<rect x="566.5" y="239.00" width="12.5" height="12.5" fill="#fff" stroke="#4a4a4a" stroke-width="1"/>
<text x="585" y="249.6" font-size="12.3" fill="#505050" textLength="27.4" lengthAdjust="spacingAndGlyphs">Stock</text>
<rect x="566.5" y="259.85" width="12.5" height="12.5" fill="#fff" stroke="#4a4a4a" stroke-width="1"/>
<text x="585" y="270.45" font-size="12.3" fill="#505050" textLength="67.7" lengthAdjust="spacingAndGlyphs">Reorder Level</text>
<rect x="566.5" y="280.70" width="12.5" height="12.5" fill="#fff" stroke="#4a4a4a" stroke-width="1"/>
<text x="585" y="291.3" font-size="12.3" fill="#505050" textLength="42.5" lengthAdjust="spacingAndGlyphs">Supplier</text>
<rect x="621.5" y="558.2" width="70.5" height="18.6" fill="#e1e1e1" stroke="#0078d7" stroke-width="2"/>
<text x="649.5" y="571.8" font-size="12" fill="#1a1a1a" textLength="14.8" lengthAdjust="spacingAndGlyphs">OK</text>
<rect x="704.2" y="558.2" width="71.5" height="18.6" fill="#e1e1e1" stroke="#adadad" stroke-width="1"/>
<text x="723.2" y="571.8" font-size="12" fill="#1a1a1a" textLength="33" lengthAdjust="spacingAndGlyphs">Cancel</text>
<rect x="780" y="582" width="1.6" height="1.6" fill="#a0a0a0"/>
<rect x="777" y="582" width="1.6" height="1.6" fill="#a0a0a0"/>
<rect x="780" y="579" width="1.6" height="1.6" fill="#a0a0a0"/>
<rect x="774" y="582" width="1.6" height="1.6" fill="#a0a0a0"/>
<rect x="777" y="579" width="1.6" height="1.6" fill="#a0a0a0"/>
<rect x="780" y="576" width="1.6" height="1.6" fill="#a0a0a0"/>
<rect x="784" y="170" width="4" height="419" fill="#ececec"/>
<path d="M784 190 L786 192.5 L788 190" fill="none" stroke="#555" stroke-width="0.9"/>
<rect x="784" y="197.6" width="4" height="1" fill="#a8a8a8"/>
<rect x="784" y="238.4" width="4" height="1" fill="#a8a8a8"/>
<rect x="784" y="252.8" width="4" height="1" fill="#a8a8a8"/>
<rect x="784" y="276" width="4" height="1" fill="#a8a8a8"/>
<rect x="784" y="294.7" width="4" height="1" fill="#a8a8a8"/>
<rect x="784" y="397" width="4" height="1" fill="#a8a8a8"/>
<rect x="784" y="473" width="4" height="1" fill="#a8a8a8"/>
<rect x="784" y="492" width="4" height="1" fill="#a8a8a8"/>
<rect x="784" y="516" width="4" height="1" fill="#a8a8a8"/>
<rect x="784" y="544" width="4" height="1" fill="#a8a8a8"/>
<rect x="784" y="561.5" width="4" height="1" fill="#a8a8a8"/>
<rect x="784" y="569" width="4" height="1" fill="#a8a8a8"/>
<rect x="784" y="197.6" width="4" height="40.8" fill="#fafafa"/>
<rect x="784" y="294.7" width="4" height="102.3" fill="#fafafa"/>
<text x="784.5" y="580" font-size="12.5" fill="#222">e</text>
<circle cx="769.6" cy="34.3" r="14.6" fill="#880202"/>
<text x="769.6" y="40.3" font-size="17" fill="#fff" text-anchor="middle"></text>
<path d="M766.2 31.3 L770 28.4 V39.8" fill="none" stroke="#fff" stroke-width="1.7" stroke-linejoin="miter"/>
<circle cx="304" cy="43.2" r="14.6" fill="#880202"/>
<text x="304" y="49.2" font-size="17" fill="#fff" text-anchor="middle">2</text>
<circle cx="675.3" cy="226.3" r="14.6" fill="#880202"/>
<text x="675.3" y="232.3" font-size="17" fill="#fff" text-anchor="middle">3</text>
<circle cx="686.4" cy="555" r="14.6" fill="#880202"/>
<text x="686.4" y="561" font-size="17" fill="#fff" text-anchor="middle">4</text>
</svg></body></html>
